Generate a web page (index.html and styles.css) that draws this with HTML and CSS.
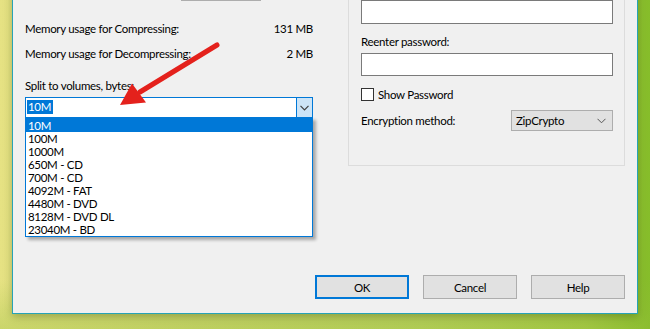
FILE: index.html
```html
<!DOCTYPE html>
<html lang="en">
<head>
    <meta charset="UTF-8">
    <title>Add to Archive</title>
    <link rel="stylesheet" href="styles.css">
</head>
<body>
    <div class="dialog">
        <div class="dialog-body">
            <div class="left-col">
                <div class="stub-button"></div>

                <div class="info-row first">
                    <span>Memory usage for Compressing:</span>
                    <span>131 MB</span>
                </div>
                <div class="info-row second">
                    <span>Memory usage for Decompressing:</span>
                    <span>2 MB</span>
                </div>

                <div class="field-label">Split to volumes, bytes:</div>
                <div class="combo">
                    <div class="combo-value"><span class="selected-text">10M</span></div>
                    <div class="combo-button">
                        <svg width="9" height="6" viewBox="0 0 9 6" fill="none" stroke="#404040" stroke-width="1.2">
                            <path d="M0.5 0.8L4.5 4.8L8.5 0.8"/>
                        </svg>
                    </div>

                    <ul class="combo-list">
                        <li class="active">10M</li>
                        <li>100M</li>
                        <li>1000M</li>
                        <li>650M - CD</li>
                        <li>700M - CD</li>
                        <li>4092M - FAT</li>
                        <li>4480M - DVD</li>
                        <li>8128M - DVD DL</li>
                        <li>23040M - BD</li>
                    </ul>
                </div>
            </div>

            <div class="group-box">
                <div class="text-input"></div>
                <div class="field-label reenter">Reenter password:</div>
                <div class="text-input second"></div>

                <label class="check-row">
                    <span class="checkbox"></span>
                    <span>Show Password</span>
                </label>

                <div class="method-row">
                    <span>Encryption method:</span>
                    <div class="select">
                        <span>ZipCrypto</span>
                        <svg width="9" height="6" viewBox="0 0 9 6" fill="none" stroke="#555" stroke-width="1">
                            <path d="M0.5 0.8L4.5 4.8L8.5 0.8"/>
                        </svg>
                    </div>
                </div>
            </div>
        </div>

        <div class="button-row">
            <button class="btn default">OK</button>
            <button class="btn">Cancel</button>
            <button class="btn">Help</button>
        </div>
    </div>

    <!-- red annotation arrow -->
    <svg class="arrow" width="650" height="329" viewBox="0 0 650 329">
        <line x1="217" y1="45" x2="140" y2="92" stroke="#e4211c" stroke-width="5" stroke-linecap="round"/>
        <polygon points="120,105 132,83.5 146,102.5" fill="#e4211c"/>
    </svg>
</body>
</html>
```

FILE: styles.css
```css
* {
    margin: 0;
    padding: 0;
    box-sizing: border-box;
}

body {
    width: 650px;
    height: 329px;
    overflow: hidden;
    position: relative;
    font-family: Lato, 'Liberation Sans', sans-serif;
    font-size: 11.5px;
    letter-spacing: -0.3px;
    color: #000;
    background:
        linear-gradient(180deg, rgba(255,255,255,0) 85%, rgba(150,190,60,0.35) 100%),
        linear-gradient(90deg, #e6e283 0%, #d2d872 30%, #bcd260 65%, #a6c944 90%, #86bd2a 100%);
}

.dialog {
    position: absolute;
    left: 12px;
    top: -30px;
    width: 626px;
    height: 344px;
    background: #f0f0f0;
    border: 1px solid #27a3b6;
    box-shadow: 0 3px 8px rgba(60, 80, 20, 0.35);
    display: flex;
    flex-direction: column;
    padding: 0 12px 14px 12px;
}

.dialog-body {
    display: flex;
    gap: 35px;
}

/* left column */

.left-col {
    width: 288px;
    display: flex;
    flex-direction: column;
}

.stub-button {
    margin-top: 7px;
    margin-left: 156px;
    width: 80px;
    height: 23px;
    background: #e1e1e1;
    border: 1px solid #adadad;
}

.info-row {
    display: flex;
    justify-content: space-between;
    line-height: 15px;
    height: 15px;
}

.info-row.first { margin-top: 20px; }
.info-row.second { margin-top: 10px; }

.field-label {
    line-height: 15px;
    height: 15px;
    margin-top: 17px;
}

.combo {
    position: relative;
    margin-top: 4px;
    height: 21px;
    border: 1px solid #0078d7;
    background: #fff;
    display: flex;
}

.combo-value {
    flex: 1;
    padding: 2px 0 0 1px;
}

.selected-text {
    display: inline-block;
    background: #0078d7;
    color: #fff;
    line-height: 14px;
    padding: 0 2px 0 1px;
}

.combo-button {
    width: 17px;
    margin: -1px -1px -1px 0;
    border: 1px solid #0078d7;
    background: #cce4f7;
    display: flex;
    align-items: center;
    justify-content: center;
}

.combo-list {
    position: absolute;
    left: -1px;
    right: -1px;
    top: 19px;
    list-style: none;
    background: #fff;
    border: 1px solid #0078d7;
    box-shadow: 3px 3px 3px rgba(0, 0, 0, 0.3);
    z-index: 2;
}

.combo-list li {
    height: 13px;
    line-height: 13px;
    padding-left: 2px;
}

.combo-list li.active {
    height: 14px;
    line-height: 15px;
    background: #0078d7;
    color: #fff;
}

/* password group */

.group-box {
    width: 277px;
    margin-top: 4px;
    border: 1px solid #dcdcdc;
    padding: 24px 11px 34px 12px;
    display: flex;
    flex-direction: column;
}

.text-input {
    height: 24px;
    background: #fff;
    border: 1px solid #7a7a7a;
}

.text-input.second {
    height: 23px;
    margin-top: 4px;
}

.field-label.reenter {
    margin-top: 10px;
}

.check-row {
    margin-top: 12px;
    height: 13px;
    display: flex;
    align-items: center;
    gap: 4px;
}

.checkbox {
    width: 13px;
    height: 13px;
    background: #fff;
    border: 1px solid #333;
}

.method-row {
    margin-top: 9px;
    display: flex;
    align-items: center;
    justify-content: space-between;
}

.select {
    width: 102px;
    height: 21px;
    background: #e1e1e1;
    border: 1px solid #adadad;
    display: flex;
    align-items: center;
    justify-content: space-between;
    padding: 0 6px 0 4px;
}

/* buttons */

.button-row {
    margin-top: auto;
    display: flex;
    justify-content: flex-end;
    gap: 14px;
}

.btn {
    width: 94px;
    height: 24px;
    font-family: inherit;
    font-size: 11.5px;
    letter-spacing: -0.3px;
    color: #000;
    background: #e1e1e1;
    border: 1px solid #adadad;
}

.btn.default {
    border: 2px solid #0078d7;
}

.arrow {
    position: absolute;
    left: 0;
    top: 0;
    z-index: 5;
}
```
